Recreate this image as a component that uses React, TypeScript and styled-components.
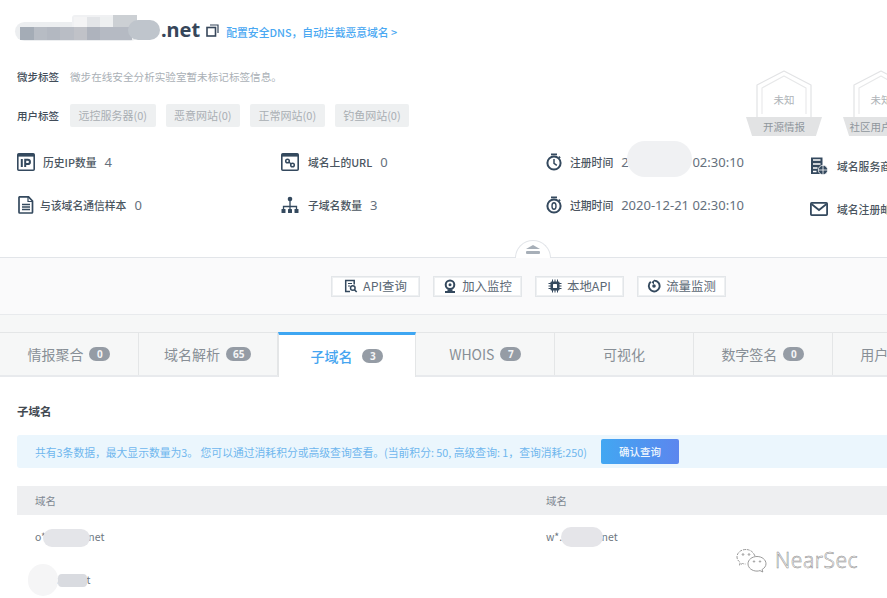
import React from 'react';
import styled, { createGlobalStyle } from 'styled-components';

const font = `"Noto Sans CJK SC", "Noto Sans", sans-serif`;

const GlobalStyle = createGlobalStyle`
  html, body {
    margin: 0;
    padding: 0;
    background: #fff;
    overflow: hidden;
  }
  body {
    font-family: ${font};
    color: #3d4d5c;
  }
`;

const Page = styled.div`
  position: relative;
  width: 887px;
  height: 598px;
  overflow: hidden;
  background: #fff;
`;

const Header = styled.header`
  height: 257px;
  padding-left: 17px;
  box-sizing: border-box;
  position: relative;
`;

const TopRow = styled.div`
  display: flex;
  height: 140px;
`;

const TopLeft = styled.div`
  flex: 1;
  min-width: 0;
`;

const TitleRow = styled.div`
  display: flex;
  align-items: center;
  height: 30px;
  margin-top: 15px;
  padding-left: 144px;
`;

const Domain = styled.h1`
  margin: 0;
  font-family: "Noto Sans", sans-serif;
  font-size: 20px;
  font-weight: 700;
  color: #36465a;
  line-height: 30px;
`;

const CopyIcon = styled.svg`
  margin-left: 6px;
  flex-shrink: 0;
`;

const DnsLink = styled.a`
  margin: 3px 0 0 7px;
  font-size: 10.8px;
  color: #4aa8f2;
  font-weight: 500;
  white-space: nowrap;
`;

const MetaRow = styled.div<{ $top: number }>`
  display: flex;
  align-items: center;
  height: 24px;
  margin-top: ${(p) => p.$top}px;
`;

const MetaLabel = styled.span`
  width: 53px;
  font-size: 10.5px;
  font-weight: 500;
  color: #414c59;
  white-space: nowrap;
`;

const MetaNote = styled.span`
  font-size: 10.6px;
  color: #aab0b6;
  white-space: nowrap;
`;

const TagList = styled.div`
  display: flex;
  gap: 10px;
`;

const Tag = styled.span`
  display: flex;
  align-items: center;
  justify-content: center;
  height: 23px;
  padding: 0 8.5px;
  font-size: 11px;
  color: #a9aeb3;
  background: #eef0f1;
  border-radius: 2px;
  white-space: nowrap;
`;

const BadgeRow = styled.div`
  display: flex;
  gap: 21px;
  padding-top: 70px;
  width: 141px;
  flex-shrink: 0;
`;

const Badge = styled.div`
  position: relative;
  width: 76px;
  height: 66px;
  flex-shrink: 0;
`;

const BadgeHex = styled.svg`
  position: absolute;
  left: 10px;
  top: 0;
`;

const BadgeValue = styled.span`
  position: absolute;
  left: 0;
  right: 0;
  top: 22px;
  text-align: center;
  font-size: 10.5px;
  color: #aeb3b7;
`;

const BadgeRibbon = styled.div`
  position: absolute;
  left: 0;
  right: 0;
  bottom: 0;
  height: 19px;
  display: flex;
  align-items: center;
  justify-content: center;
  font-size: 10.5px;
  color: #8f969c;
  background: #e2e3e4;
  clip-path: polygon(0 0, 100% 0, 92% 100%, 8% 100%);
  white-space: nowrap;
`;

const StatGrid = styled.div`
  display: grid;
  grid-template-columns: repeat(4, 264px);
  grid-auto-rows: 43px;
  margin-top: 7px;
`;

const Stat = styled.div<{ $lower?: boolean }>`
  display: flex;
  align-items: center;
  white-space: nowrap;
  height: 30px;
  padding-top: ${(p) => (p.$lower ? 4 : 0)}px;
  padding-left: ${(p) => (p.$lower ? 1 : 0)}px;
`;

const StatIcon = styled.svg`
  width: 18px;
  height: 18px;
  flex-shrink: 0;
  color: #34495e;
`;

const StatLabel = styled.span<{ $gap: number }>`
  margin-left: ${(p) => p.$gap}px;
  font-size: 10.8px;
  font-weight: 500;
  color: #4a5560;
`;

const StatValue = styled.span`
  margin-left: 8px;
  font-family: "Noto Sans", sans-serif;
  font-size: 13px;
  color: #65707c;
`;

const Collapse = styled.div`
  position: absolute;
  left: 515px;
  bottom: -1px;
  width: 36px;
  height: 18px;
  box-sizing: border-box;
  border: 1px solid #e2e5e9;
  border-bottom: 0;
  border-radius: 18px 18px 0 0;
  background: #fff;
  display: flex;
  align-items: center;
  justify-content: center;
`;

const ActionBar = styled.div`
  height: 58px;
  box-sizing: border-box;
  border-top: 1px solid #e2e5e9;
  border-bottom: 1px solid #e8eaed;
  background: #fafafb;
  display: flex;
  align-items: center;
  gap: 13px;
  padding: 0 0 0 331px;
`;

const ActionButton = styled.button`
  display: flex;
  align-items: center;
  justify-content: center;
  gap: 5px;
  height: 21px;
  width: 89px;
  padding: 0;
  background: #fff;
  border: 1px solid #e3e6e9;
  box-shadow: 0 0 0 1px #eef0f2 inset;
  font-family: ${font};
  font-size: 12.4px;
  color: #5b6875;
  white-space: nowrap;
`;

const ActionIcon = styled.svg`
  width: 14px;
  height: 14px;
  color: #34495e;
  flex-shrink: 0;
`;

const Gap = styled.div`
  height: 17px;
  background: #f6f7f7;
`;

const Tabs = styled.nav`
  display: flex;
  height: 45px;
  box-sizing: border-box;
  background: #f6f7f7;
  border-top: 1px solid #e4e6e7;
  border-bottom: 2px solid #e8eaed;
`;

const TabItem = styled.div<{ $active?: boolean }>`
  width: 138.8px;
  flex-shrink: 0;
  box-sizing: border-box;
  display: flex;
  align-items: center;
  justify-content: center;
  gap: 6px;
  font-size: 14px;
  white-space: nowrap;
  border-right: 1px solid #e4e6e7;
  color: ${(p) => (p.$active ? '#46a5f0' : '#888f96')};
  background: ${(p) => (p.$active ? '#fff' : 'transparent')};
  font-weight: ${(p) => (p.$active ? 500 : 400)};
  ${(p) =>
    p.$active
      ? `
    border-top: 3px solid #3ea6f2;
    border-left: 1px solid #e4e6e7;
    margin: -1px 0 -2px;
    height: 45px;
    gap: 10px;
  `
      : ''}
`;

const Count = styled.span`
  min-width: 21px;
  height: 14px;
  box-sizing: border-box;
  padding: 0 7px;
  display: inline-flex;
  align-items: center;
  justify-content: center;
  border-radius: 7px;
  background: #959ca5;
  font-family: "Noto Sans", sans-serif;
  font-size: 10px;
  font-weight: 700;
  color: #f4f5f6;
`;

const Content = styled.section`
  padding: 0 0 0 17px;
`;

const SectionTitle = styled.h2`
  margin: 24px 0 0;
  height: 20px;
  line-height: 20px;
  font-size: 11.5px;
  font-weight: 700;
  color: #434a52;
`;

const Notice = styled.div`
  display: flex;
  align-items: center;
  height: 33px;
  margin-top: 14px;
  padding-left: 18px;
  background: #ebf6fd;
  border-radius: 3px 0 0 3px;
  white-space: nowrap;
`;

const NoticeText = styled.span`
  font-size: 10.8px;
  color: #6fb6ee;
`;

const ConfirmButton = styled.button`
  width: 78px;
  height: 25px;
  margin-left: 14px;
  flex-shrink: 0;
  padding: 0;
  border: 0;
  border-radius: 2px;
  background: linear-gradient(90deg, #42a7f2, #5c86ee);
  color: #eef6fe;
  font-family: ${font};
  font-size: 10.5px;
  font-weight: 500;
`;

const Table = styled.div`
  margin-top: 18px;
`;

const TableRow = styled.div<{ $head?: boolean }>`
  display: grid;
  grid-template-columns: 511px 1fr;
  align-items: center;
  height: ${(p) => (p.$head ? 29 : 43)}px;
  padding-left: 18px;
  background: ${(p) => (p.$head ? '#eeeff1' : 'transparent')};
  font-size: 10.5px;
  color: ${(p) => (p.$head ? '#7e8891' : '#6e7781')};
`;

const Cell = styled.span`
  white-space: nowrap;
`;

const Blur = styled.div<{ $x: number; $y: number; $w: number; $h: number; $c: string; $r?: number }>`
  position: absolute;
  left: ${(p) => p.$x}px;
  top: ${(p) => p.$y}px;
  width: ${(p) => p.$w}px;
  height: ${(p) => p.$h}px;
  border-radius: ${(p) => p.$r ?? p.$h / 2}px;
  background: ${(p) => p.$c};
`;

const Watermark = styled.div`
  position: absolute;
  left: 736px;
  top: 545px;
  display: flex;
  align-items: center;
  gap: 7px;
`;

const WatermarkText = styled.span`
  font-family: "Noto Sans", sans-serif;
  font-size: 21px;
  font-weight: 300;
  line-height: 30px;
  letter-spacing: 0.5px;
  color: #fff;
  -webkit-text-stroke: 0.5px #8a8a8a;
`;

function Icon({ name }: { name: string }) {
  const common = { viewBox: '0 0 18 18', fill: 'none' };
  if (name === 'ip') {
    return (
      <StatIcon {...common}>
        <rect x="0.8" y="0.8" width="16.4" height="16.4" rx="1" stroke="currentColor" strokeWidth="1.6" />
        <rect x="1" y="1" width="16" height="2.6" fill="currentColor" />
        <path d="M4.8 6v8M8.2 14V6.8h2.6a2.1 2.1 0 0 1 0 4.3H8.2" stroke="currentColor" strokeWidth="2" />
      </StatIcon>
    );
  }
  if (name === 'url') {
    return (
      <StatIcon {...common}>
        <rect x="0.8" y="0.8" width="16.4" height="16.4" rx="1" stroke="currentColor" strokeWidth="1.6" />
        <rect x="1" y="1" width="16" height="2.6" fill="currentColor" />
        <circle cx="6.5" cy="8" r="1.8" stroke="currentColor" strokeWidth="1.5" />
        <circle cx="11.5" cy="12" r="1.8" stroke="currentColor" strokeWidth="1.5" />
        <path d="M7.6 9l2.8 2" stroke="currentColor" strokeWidth="1.5" />
      </StatIcon>
    );
  }
  if (name === 'file') {
    return (
      <StatIcon {...common}>
        <path d="M2 1.5a.7.7 0 0 1 .7-.7h8.8l4 4.2v11.3a.7.7 0 0 1-.7.7H2.7a.7.7 0 0 1-.7-.7z" stroke="currentColor" strokeWidth="1.7" />
        <path d="M11 1v4.5h4.5" stroke="currentColor" strokeWidth="1.2" />
        <path d="M5 8.5h8M5 11h8M5 13.5h8" stroke="currentColor" strokeWidth="1.3" />
      </StatIcon>
    );
  }
  if (name === 'tree') {
    return (
      <StatIcon {...common}>
        <circle cx="9" cy="3" r="2.3" fill="currentColor" />
        <path d="M9 5v6M2.5 13v-2.5h13V13M9 10v3" stroke="currentColor" strokeWidth="1.3" />
        <rect x="0.5" y="13" width="4" height="4" rx="0.5" fill="currentColor" />
        <rect x="7" y="13" width="4" height="4" rx="0.5" fill="currentColor" />
        <rect x="13.5" y="13" width="4" height="4" rx="0.5" fill="currentColor" />
      </StatIcon>
    );
  }
  if (name === 'clock' || name === 'zero') {
    return (
      <StatIcon {...common}>
        <rect x="6" y="0.5" width="6" height="1.8" fill="currentColor" />
        <path d="M13.8 3.5l1.4 1.4" stroke="currentColor" strokeWidth="1.4" />
        <circle cx="9" cy="10" r="6.6" stroke="currentColor" strokeWidth="2" />
        {name === 'clock' ? (
          <path d="M9 6v4.4l2.8 2" stroke="currentColor" strokeWidth="1.5" />
        ) : (
          <ellipse cx="9" cy="10" rx="2" ry="3.2" stroke="currentColor" strokeWidth="1.4" />
        )}
      </StatIcon>
    );
  }
  if (name === 'server') {
    return (
      <StatIcon {...common}>
        <path d="M1 0.5h11.5V17H1z" fill="currentColor" />
        <path d="M3 3h7.5M3 7h7.5M3 11h4.5M3 14.5h3.5" stroke="#fff" strokeWidth="1.3" />
        <circle cx="13" cy="13" r="4.7" fill="currentColor" stroke="#fff" strokeWidth="0.8" />
        <path d="M8.5 13h9M13 8.5v9" stroke="#fff" strokeWidth="0.8" />
      </StatIcon>
    );
  }
  return (
    <StatIcon {...common}>
      <rect x="0.9" y="2.9" width="16.2" height="12.2" rx="0.8" stroke="currentColor" strokeWidth="1.8" />
      <path d="M1.5 4L9 10l7.5-6" stroke="currentColor" strokeWidth="1.8" />
    </StatIcon>
  );
}

function ButtonIcon({ name }: { name: string }) {
  const common = { viewBox: '0 0 14 14', fill: 'none' };
  if (name === 'search') {
    return (
      <ActionIcon {...common}>
        <path d="M6 12.5H1.7v-11h8.5v4" stroke="currentColor" strokeWidth="1.5" />
        <path d="M4 4.5h4M4 7h2" stroke="currentColor" strokeWidth="1.2" />
        <circle cx="8.8" cy="9" r="2.3" stroke="currentColor" strokeWidth="1.5" />
        <path d="M10.5 10.8l2.2 2.2" stroke="currentColor" strokeWidth="1.6" />
      </ActionIcon>
    );
  }
  if (name === 'camera') {
    return (
      <ActionIcon {...common}>
        <circle cx="7" cy="5.7" r="4.3" stroke="currentColor" strokeWidth="2" />
        <circle cx="7" cy="5.7" r="1.5" fill="currentColor" />
        <path d="M2 13h10M4.5 11.5h5" stroke="currentColor" strokeWidth="1.8" />
      </ActionIcon>
    );
  }
  if (name === 'chip') {
    return (
      <ActionIcon {...common}>
        <path d="M4.5 0.5v13M7 0.5v13M9.5 0.5v13M0.5 4.5h13M0.5 7h13M0.5 9.5h13" stroke="currentColor" strokeWidth="1" />
        <rect x="2.5" y="2.5" width="9" height="9" rx="1" fill="currentColor" />
        <rect x="5" y="5" width="4" height="4" rx="0.5" fill="#fff" />
      </ActionIcon>
    );
  }
  return (
    <ActionIcon {...common}>
      <path d="M3.8 2.8A5.4 5.4 0 1 0 7 1.6" stroke="currentColor" strokeWidth="1.9" />
      <path d="M7 1v4.5L4.500 3.200z" fill="currentColor" />
      <circle cx="7" cy="7" r="1.8" fill="currentColor" />
    </ActionIcon>
  );
}

const stats = [
  { icon: 'ip', label: '历史IP数量', value: '4', gap: 8 },
  { icon: 'url', label: '域名上的URL', value: '0', gap: 9 },
  { icon: 'clock', label: '注册时间', value: '2020-12-21 02:30:10', gap: 7 },
  { icon: 'server', label: '域名服务商', value: '', gap: 9, lower: true },
  { icon: 'file', label: '与该域名通信样本', value: '0', gap: 5 },
  { icon: 'tree', label: '子域名数量', value: '3', gap: 9 },
  { icon: 'zero', label: '过期时间', value: '2020-12-21 02:30:10', gap: 7 },
  { icon: 'mail', label: '域名注册邮箱', value: '', gap: 9, lower: true },
];

const tabs = [
  { label: '情报聚合', count: '0' },
  { label: '域名解析', count: '65' },
  { label: '子域名', count: '3', active: true },
  { label: 'WHOIS', count: '7' },
  { label: '可视化' },
  { label: '数字签名', count: '0' },
  { label: '用户评论', count: '0' },
];

const blurs = [
  { x: 15, y: 22, w: 125, h: 19, c: '#eceef0' },
  { x: 72, y: 15, w: 65, h: 14, c: '#f0f1f3', r: 3 },
  { x: 74, y: 17, w: 13, h: 10, c: '#f4f4f5', r: 0 },
  { x: 87, y: 17, w: 13, h: 10, c: '#e3e5e8', r: 0 },
  { x: 100, y: 17, w: 13, h: 10, c: '#eef0f1', r: 0 },
  { x: 113, y: 15, w: 24, h: 12, c: '#ccd0d4', r: 0 },
  { x: 20, y: 27, w: 14, h: 13, c: '#a4acb6', r: 0 },
  { x: 34, y: 27, w: 13, h: 13, c: '#b7bcc4', r: 0 },
  { x: 47, y: 27, w: 13, h: 13, c: '#b3b8c1', r: 0 },
  { x: 60, y: 27, w: 14, h: 13, c: '#b9bdc5', r: 0 },
  { x: 74, y: 27, w: 13, h: 13, c: '#c0c2c8', r: 0 },
  { x: 87, y: 27, w: 13, h: 13, c: '#aeb3bd', r: 0 },
  { x: 100, y: 27, w: 32, h: 13, c: '#b5bac3', r: 0 },
  { x: 128, y: 20, w: 32, h: 20, c: '#bfc5cc' },
  { x: 627, y: 141, w: 65, h: 36, c: '#f0f1f3' },
  { x: 43, y: 529, w: 47, h: 18, c: '#e4e5e9' },
  { x: 28, y: 564, w: 30, h: 32, c: '#f5f5f6' },
  { x: 58, y: 574, w: 29, h: 13, c: '#d9dbe0', r: 4 },
  { x: 561, y: 527, w: 42, h: 20, c: '#e5e5e9' },
];

export default function App() {
  return (
    <Page>
      <GlobalStyle />
      <Header>
        <TopRow>
          <TopLeft>
            <TitleRow>
              <Domain>.net</Domain>
              <CopyIcon width="13" height="13" viewBox="0 0 13 13" fill="none">
                <rect x="1" y="3.5" width="8.5" height="8.5" stroke="#36465a" strokeWidth="1.6" />
                <path d="M4 1h8v8" stroke="#36465a" strokeWidth="1.2" />
              </CopyIcon>
              <DnsLink>配置安全DNS，自动拦截恶意域名 &gt;</DnsLink>
            </TitleRow>
            <MetaRow $top={19}>
              <MetaLabel>微步标签</MetaLabel>
              <MetaNote>微步在线安全分析实验室暂未标记标签信息。</MetaNote>
            </MetaRow>
            <MetaRow $top={15}>
              <MetaLabel>用户标签</MetaLabel>
              <TagList>
                <Tag>远控服务器(0)</Tag>
                <Tag>恶意网站(0)</Tag>
                <Tag>正常网站(0)</Tag>
                <Tag>钓鱼网站(0)</Tag>
              </TagList>
            </MetaRow>
          </TopLeft>
          <BadgeRow>
            {['开源情报', '社区用户情报'].map((name) => (
              <Badge key={name}>
                <BadgeHex width="56" height="50" viewBox="0 0 56 50" fill="none" strokeLinejoin="round">
                  <path d="M1 47V15L28 1l27 14v32" stroke="#e2e3e5" strokeWidth="1.2" />
                  <path d="M6 44V18L28 6l22 12v26" stroke="#e7e8e9" strokeWidth="1.1" />
                </BadgeHex>
                <BadgeValue>未知</BadgeValue>
                <BadgeRibbon>{name}</BadgeRibbon>
              </Badge>
            ))}
          </BadgeRow>
        </TopRow>
        <StatGrid>
          {stats.map((s) => (
            <Stat key={s.label} $lower={s.lower}>
              <Icon name={s.icon} />
              <StatLabel $gap={s.gap}>{s.label}</StatLabel>
              {s.value && <StatValue>{s.value}</StatValue>}
            </Stat>
          ))}
        </StatGrid>
        <Collapse>
          <svg width="16" height="9" viewBox="0 0 16 9">
            <path d="M8 0l7 4H1z" fill="#a7afb8" />
            <rect x="1" y="6" width="14" height="3" rx="1" fill="#a7afb8" />
          </svg>
        </Collapse>
      </Header>
      <ActionBar>
        <ActionButton>
          <ButtonIcon name="search" />
          API查询
        </ActionButton>
        <ActionButton>
          <ButtonIcon name="camera" />
          加入监控
        </ActionButton>
        <ActionButton>
          <ButtonIcon name="chip" />
          本地API
        </ActionButton>
        <ActionButton>
          <ButtonIcon name="flow" />
          流量监测
        </ActionButton>
      </ActionBar>
      <Gap />
      <Tabs>
        {tabs.map((t) => (
          <TabItem key={t.label} $active={t.active}>
            {t.label}
            {t.count && <Count>{t.count}</Count>}
          </TabItem>
        ))}
      </Tabs>
      <Content>
        <SectionTitle>子域名</SectionTitle>
        <Notice>
          <NoticeText>
            共有3条数据，最大显示数量为3。 您可以通过消耗积分或高级查询查看。(当前积分: 50, 高级查询: 1，查询消耗:250)
          </NoticeText>
          <ConfirmButton>确认查询</ConfirmButton>
        </Notice>
        <Table>
          <TableRow $head>
            <Cell>域名</Cell>
            <Cell>域名</Cell>
          </TableRow>
          <TableRow>
            <Cell>o*.xxxxxxx.net</Cell>
            <Cell>w*.xxxxxxx.net</Cell>
          </TableRow>
          <TableRow>
            <Cell>xxxxxxx.net</Cell>
          </TableRow>
        </Table>
      </Content>
      {blurs.map((b) => (
        <Blur key={`${b.x}-${b.y}`} $x={b.x} $y={b.y} $w={b.w} $h={b.h} $c={b.c} $r={b.r} />
      ))}
      <Watermark>
        <svg width="32" height="27" viewBox="0 0 32 24" fill="none" stroke="#8f8f8f" strokeWidth="0.9">
          <path d="M10 1C4.5 1 1 4.6 1 8.4c0 2.400 1.300 4.200 3.300 5.600l-.8 2.600 3-1.600c1 .3 2 .5 3 .5" strokeDasharray="3 1" />
          <path d="M19 7.500C17.500 3.500 14 1 10 1" strokeDasharray="3 1" />
          <path d="M21 8c-5 0-9 3.200-9 7.300s4 7.300 9 7.300c1 0 2-.2 3-.5l2.800 1.400-.7-2.500c2.400-1.400 3.900-3.500 3.900-5.700C30 11.200 26 8 21 8z" />
          <circle cx="7" cy="6" r="0.8" />
          <circle cx="13" cy="6" r="0.8" />
          <circle cx="18" cy="13" r="0.7" />
          <circle cx="24" cy="13" r="0.7" />
        </svg>
        <WatermarkText>NearSec</WatermarkText>
      </Watermark>
    </Page>
  );
}
